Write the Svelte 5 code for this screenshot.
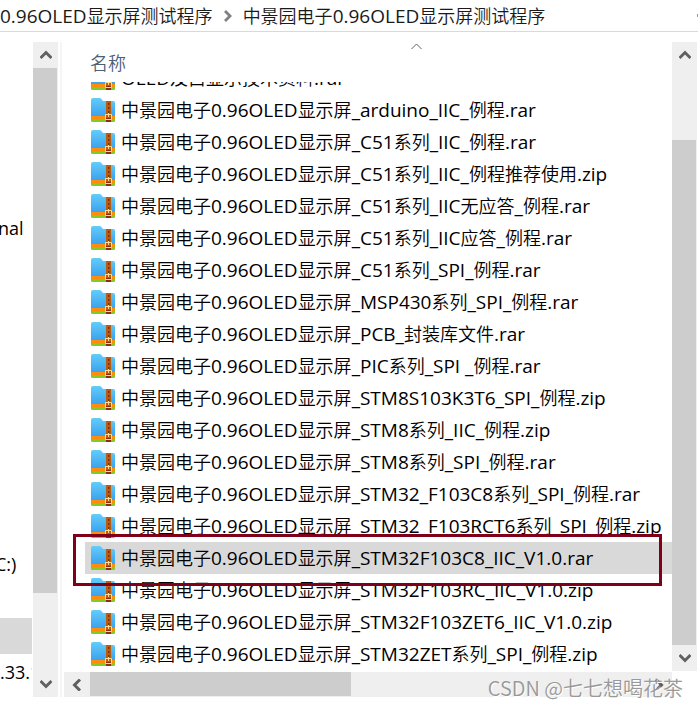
<script>
	const path = ['0.96OLED显示屏测试程序', '中景园电子0.96OLED显示屏测试程序'];

	const places = [
		{ label: 'nal', kind: 'account' },
		{ label: 'C:)', kind: 'drive' },
		{ label: '', kind: 'blank' },
		{ label: '', kind: 'current' },
		{ label: '.33.1', kind: 'host' },
	];

	const prefix = '中景园电子0.96OLED显示屏_';
	const files = [
		'OLED及白显示技术资料.rar',
		prefix + 'arduino_IIC_例程.rar',
		prefix + 'C51系列_IIC_例程.rar',
		prefix + 'C51系列_IIC_例程推荐使用.zip',
		prefix + 'C51系列_IIC无应答_例程.rar',
		prefix + 'C51系列_IIC应答_例程.rar',
		prefix + 'C51系列_SPI_例程.rar',
		prefix + 'MSP430系列_SPI_例程.rar',
		prefix + 'PCB_封装库文件.rar',
		prefix + 'PIC系列_SPI _例程.rar',
		prefix + 'STM8S103K3T6_SPI_例程.zip',
		prefix + 'STM8系列_IIC_例程.zip',
		prefix + 'STM8系列_SPI_例程.rar',
		prefix + 'STM32_F103C8系列_SPI_例程.rar',
		prefix + 'STM32_F103RCT6系列_SPI_例程.zip',
		prefix + 'STM32F103C8_IIC_V1.0.rar',
		prefix + 'STM32F103RC_IIC_V1.0.zip',
		prefix + 'STM32F103ZET6_IIC_V1.0.zip',
		prefix + 'STM32ZET系列_SPI_例程.zip',
	];

	let selected = $state(15);

	// latin runs are set one size up from the chinese ones
	function runs(text) {
		return text.match(/[\x20-\x7e]+|[^\x20-\x7e]+/g) ?? [];
	}
</script>

{#snippet mixed(text)}{#each runs(text) as run}{#if run.charCodeAt(0) < 127}<span class="latin">{run}</span>{:else}{run}{/if}{/each}{/snippet}

{#snippet arrow(dir)}
	<svg class="arrow {dir}" width="12" height="12" viewBox="0 0 12 12" aria-hidden="true">
		<path d="M.5 9 6 3.5 11.500 9" fill="none" stroke="#606060" stroke-width="3" />
	</svg>
{/snippet}

{#snippet scrollbar(axis, start, size)}
	<div class="scrollbar {axis}">
		<button aria-label={axis === 'vertical' ? 'Up' : 'Left'}>{@render arrow(axis === 'vertical' ? 'up' : 'left')}</button>
		<div class="track">
			<div style="flex: {start} 0 0"></div>
			<div class="thumb" style="flex: {size} 0 0"></div>
			<div style="flex: {100 - start - size} 0 0"></div>
		</div>
		<button aria-label={axis === 'vertical' ? 'Down' : 'Right'}>{@render arrow(axis === 'vertical' ? 'down' : 'right')}</button>
	</div>
{/snippet}

<svg class="defs" width="0" height="0" aria-hidden="true">
	<defs>
		<linearGradient id="folder" x1="0" y1="0" x2="0" y2="1">
			<stop offset="0" stop-color="#63cdfa" />
			<stop offset="1" stop-color="#3ba2ee" />
		</linearGradient>
	</defs>
</svg>

<div class="explorer">
	<nav class="path">
		<button class="crumb">{@render mixed(path[0])}</button>
		<svg width="8" height="12" viewBox="0 0 8 12" aria-hidden="true">
			<path d="M1 1 6 6 1 11" fill="none" stroke="#808080" stroke-width="2.800" />
		</svg>
		<button class="crumb">{@render mixed(path[1])}</button>
		<span class="history"></span>
	</nav>

	<div class="panes">
		<ul class="places">
			{#each places as place}
				<li class={place.kind}>{@render mixed(place.label)}</li>
			{/each}
		</ul>
		{@render scrollbar('vertical', 0, 87)}
		<div class="splitter"></div>

		<main>
			<button class="column">
				名称
				<svg width="11" height="7" viewBox="0 0 11 7" aria-hidden="true">
					<path d="M.5 6 5.5 1l5 5" fill="none" stroke="#606060" />
				</svg>
			</button>
			<div class="viewport">
				<ul class="files">
					{#each files as file, i}
						<li class:selected={i === selected}>
							<button class="file" onclick={() => (selected = i)}>
								<svg width="24" height="24" viewBox="0 0 24 24" aria-hidden="true">
									<path d="M0 18h24v4.500q0 1.500-1.500 1.500h-21Q0 24 0 22.500z" fill="#80cc28" />
									<path d="M0 16h24v3q0 2-1.500 2h-21Q0 21 0 19z" fill="#ff8c0a" />
									<path d="M0 2Q0 0 2 0h6.500q1 0 1.700.8L12 3h10q2 0 2 2v13H0z" fill="url(#folder)" />
									<path d="M15 3h5v21h-5z" fill="#b95b12" />
									<path d="M15 20h5v4h-5z" fill="#8e2f0b" />
									<path d="M17 5h1.500v2H17zm0 4h1.500v2H17zm0 4h1.500v2H17z" fill="#783709" />
									<path d="M14.500 16.500h6v5h-6zM17.500 15v4" fill="none" stroke="#ffdc85" />
								</svg>
								<span class="name">{@render mixed(file)}</span>
							</button>
							{#if i === 15}<div class="marker"></div>{/if}
						</li>
					{/each}
				</ul>
			</div>
			{@render scrollbar('horizontal', 0, 47)}
		</main>

		<div class="side">
			{@render scrollbar('vertical', 12.5, 87.5)}
		</div>
	</div>

	<div class="watermark">CSDN @七七想喝花茶</div>
</div>

<style>
	:global(body) {
		background: #fff;
	}

	.defs {
		position: absolute;
	}

	.explorer {
		position: relative;
		overflow: hidden;
		padding-bottom: 10px;
		font: 350 18px/30px 'Noto Sans CJK SC', sans-serif;
		color: #000;
		white-space: nowrap;
	}

	.latin {
		font: 370 19px/20px 'Open Sans', 'Noto Sans', sans-serif;
		white-space: pre;
	}

	button {
		padding: 0;
		border: 0;
		background: none;
		font: inherit;
		color: inherit;
		text-align: left;
	}

	ul {
		margin: 0;
		padding: 0;
		list-style: none;
	}

	.path {
		display: flex;
		align-items: center;
		gap: 11px;
		height: 31px;
		border-bottom: 1px solid #d9d9d9;
		color: #1a1a1a;
	}

	.crumb {
		padding-bottom: 2px;
	}

	.history {
		width: 1px;
		height: 3px;
		margin-left: auto;
		background: #999;
	}

	.panes {
		display: grid;
		grid-template-columns: 33px 25px 6px minmax(0, 1fr) 26px;
		margin-top: 10px;
	}

	.places {
		overflow: hidden;
		margin-right: 1px;
		padding-top: 168px;
	}

	.places li {
		height: 36px;
		line-height: 34px;
	}

	.places .latin {
		font-size: 18px;
	}

	.places .account {
		margin-left: -2px;
	}

	.places .drive {
		margin: 300px 0 0 -5px;
	}

	.places .current {
		background: #d9d9d9;
	}

	.scrollbar {
		display: flex;
		flex: 1;
		background: #efefef;
	}

	.scrollbar button {
		display: flex;
		align-items: center;
		justify-content: center;
		flex: none;
		width: 25px;
		height: 26px;
	}

	.horizontal button {
		width: 26px;
		height: 25px;
	}

	.vertical,
	.vertical .track {
		flex-direction: column;
	}

	.track {
		display: flex;
		flex: 1;
	}

	.thumb {
		background: #cdcdcd;
	}

	.vertical .thumb {
		margin-right: 1px;
	}

	.horizontal .thumb {
		margin-bottom: 1px;
	}

	.down {
		transform: rotate(180deg);
	}

	.left {
		transform: rotate(-90deg);
	}

	.right {
		transform: rotate(90deg);
	}

	.splitter {
		width: 2px;
		margin-left: 2px;
		background: #f5f5f5;
	}

	main {
		min-width: 0;
	}

	.column {
		position: relative;
		display: block;
		width: 100%;
		height: 40px;
		padding-left: 26px;
		line-height: 40px;
		color: #4c607a;
	}

	.column svg {
		position: absolute;
		top: 1px;
		left: 57%;
	}

	.viewport {
		overflow: hidden;
		padding-bottom: 2px;
	}

	.files {
		margin-top: -20px;
	}

	.files li {
		position: relative;
		height: 32px;
		padding-left: 21px;
	}

	.file {
		display: flex;
		align-items: center;
		gap: 6px;
		width: 100%;
		height: 32px;
		padding-left: 6px;
	}

	.file svg {
		flex: none;
	}

	.name {
		padding-bottom: 2px;
	}

	.selected .file {
		background: #d9d9d9;
	}

	.marker {
		position: absolute;
		z-index: 1;
		inset: -8px 10px -12px 9px;
		border: 3px solid #80001a;
		pointer-events: none;
	}

	.side {
		display: flex;
		margin: 0 1px 26px 0;
	}

	.watermark {
		position: absolute;
		right: 15px;
		bottom: 4px;
		font-size: 20px;
		color: #999;
		text-shadow: 1px 1px #fff;
	}
</style>
